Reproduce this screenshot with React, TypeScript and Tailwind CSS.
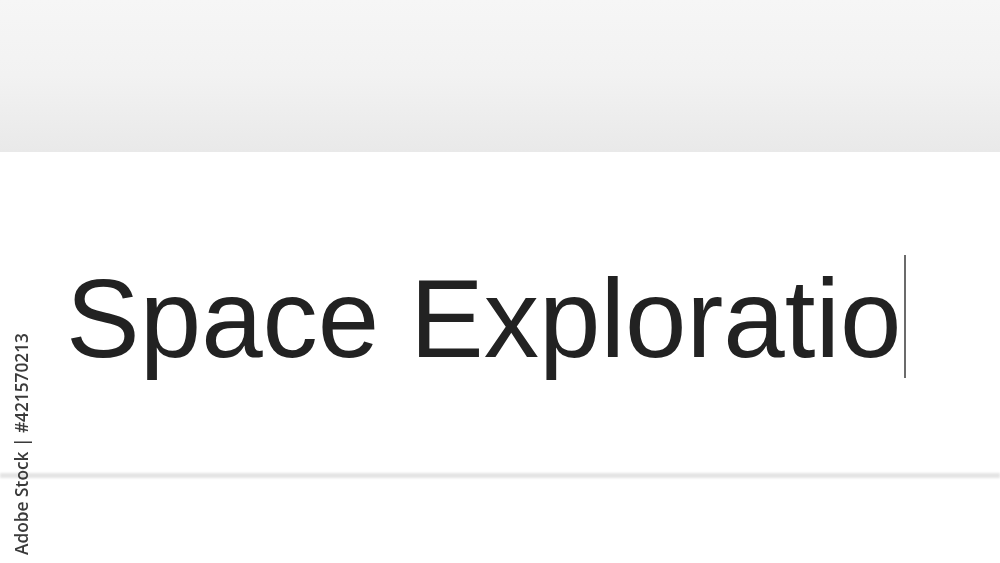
import React from "react";

export default function App() {
  return (
    <div className="relative w-[1000px] h-[563px] overflow-hidden bg-white">
      <div className="h-[152px] bg-gradient-to-b from-[#f6f6f6] via-[#f2f2f2] to-[#e9e9e9]" />
      <div className="h-[321px] bg-white pt-[112px] pl-[66px]">
        <div className="flex items-start">
          <span
            className="text-[110.5px] leading-[110px] text-[#222222]"
            style={{ fontFamily: '"Liberation Sans", Arial, sans-serif' }}
          >
            Space Exploratio
          </span>
          <span className="ml-[3px] mt-[-9px] w-[1.5px] h-[123px] bg-[#6b6b6b]" />
        </div>
      </div>
      <div className="h-[5px] bg-[#e4e4e4] blur-[1px]" />
      <div className="flex-1 bg-white" />
      <div
        className="absolute left-[12px] bottom-[8px] [writing-mode:vertical-rl] rotate-180 text-[17.3px] leading-[20px] text-[#3a3a3a] font-semibold"
        style={{ fontFamily: '"Open Sans", sans-serif' }}
      >
        Adobe Stock | #421570213
      </div>
    </div>
  );
}
